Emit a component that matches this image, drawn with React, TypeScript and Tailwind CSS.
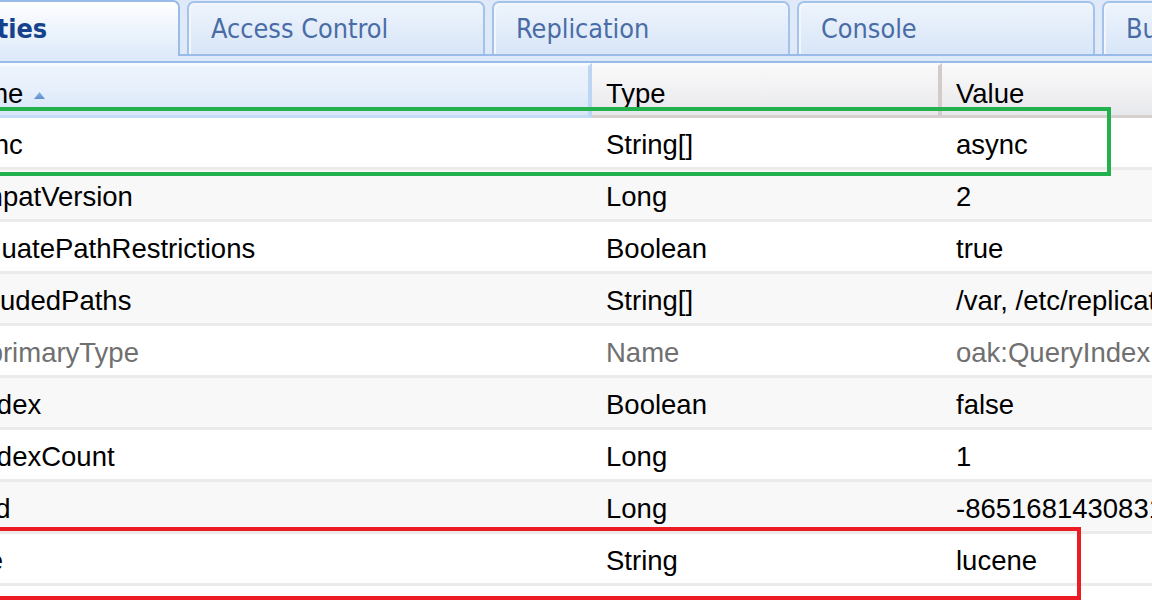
import React from "react";

const tabFont = { fontFamily: '"DejaVu Sans Condensed", "DejaVu Sans", Tahoma, sans-serif' };
const gridFont = { fontFamily: '"Liberation Sans", Arial, sans-serif' };

const tabs = ["Properties", "Access Control", "Replication", "Console", "Build Info"];

// property rows of the selected oak index node
const rows = [
  { name: "async", type: "String[]", value: "async" },
  { name: "compatVersion", type: "Long", value: "2" },
  { name: "evaluatePathRestrictions", type: "Boolean", value: "true" },
  { name: "excludedPaths", type: "String[]", value: "/var, /etc/replication, /etc/workflow/instances, /jcr:system" },
  { name: "jcr:primaryType", type: "Name", value: "oak:QueryIndexDefinition", muted: true },
  { name: "reindex", type: "Boolean", value: "false" },
  { name: "reindexCount", type: "Long", value: "1" },
  { name: "seed", type: "Long", value: "-8651681430831709416" },
  { name: "type", type: "String", value: "lucene" },
];

const SortArrow = () => (
  <svg width="11" height="7" viewBox="0 0 11 7" className="ml-[11px] mt-[3px] shrink-0">
    <defs>
      <linearGradient id="arr" x1="0" y1="0" x2="0" y2="1">
        <stop offset="0" stopColor="#8db5e6" />
        <stop offset="1" stopColor="#5f8fd0" />
      </linearGradient>
    </defs>
    <path d="M5.5 0 L11 7 L0 7 Z" fill="url(#arr)" />
  </svg>
);

export default function App() {
  return (
    <div className="relative w-[1152px] h-[605px] overflow-hidden bg-white">
      {/* Tab strip */}
      <div className="-ml-[118px] w-[1700px]" style={tabFont}>
        <div className="flex items-end gap-[7px] h-[56px] bg-[#dfe9f7] border-b-2 border-[#99bbe8]">
          {tabs.map((t, i) =>
            i === 0 ? (
              <div
                key={t}
                className="relative z-10 -mb-[2px] flex shrink-0 items-center w-[298px] h-[56px] pl-[21px] pt-[1px] rounded-t-[7px] border-x-2 border-t-2 border-[#99bbe8] bg-gradient-to-b from-[#ffffff] to-[#deeafa] text-[26.8px] font-bold text-[#15428b]"
              >
                {t}
              </div>
            ) : (
              <div
                key={t}
                className="flex shrink-0 items-center w-[298px] h-[53px] pl-[22px] pt-[1px] rounded-t-[7px] border-x-2 border-t-2 border-[#a3c3ea] bg-gradient-to-b from-[#eef4fc] to-[#d8e6f8] shadow-[inset_2px_2px_0_#f3f7fd] text-[26.8px] text-[#4a6ca6]"
              >
                {t}
              </div>
            )
          )}
        </div>
        <div className="h-[7px] bg-[#deeafa] border-b-2 border-[#99bbe8]" />
      </div>

      {/* Grid */}
      <div className="-ml-[54px] w-[1400px] text-[27.5px] text-black" style={gridFont}>
        {/* Header */}
        <div className="flex h-[55px]">
          <div className="flex shrink-0 items-center w-[646px] pl-[4px] pt-[6px] border-t-[3px] border-t-[#f7fafe] border-r-[4px] border-r-[#bcd6f4] border-b-[3px] border-b-[#c6dbf5] bg-gradient-to-b from-[#eef4fc] via-[#e6effb] to-[#d8e6f8]">
            <span>Name</span>
            <SortArrow />
          </div>
          <div className="flex shrink-0 items-center w-[350px] pl-[14px] pt-[6px] border-t-[3px] border-t-[#fbfbfb] border-r-[4px] border-r-[#d3caca] border-b-[3px] border-b-[#d8d0d0] bg-gradient-to-b from-[#f9f9f9] via-[#f1f1f3] to-[#e7e8ec]">
            Type
          </div>
          <div className="flex items-center flex-1 pl-[14px] pt-[6px] border-t-[3px] border-t-[#fbfbfb] border-b-[3px] border-b-[#d8d0d0] bg-gradient-to-b from-[#f9f9f9] via-[#f1f1f3] to-[#e7e8ec]">
            Value
          </div>
        </div>

        {/* Rows */}
        {rows.map((r, i) => (
          <div
            key={r.name}
            className={`flex h-[52px] items-center pt-[5px] border-b-[3px] border-[#edeaea] whitespace-nowrap ${
              i % 2 === 1 ? "bg-[#f8f8f8]" : "bg-white"
            } ${r.muted ? "text-[#707070]" : "text-black"}`}
          >
            <div className="w-[646px] shrink-0 pl-[5px] overflow-hidden">{r.name}</div>
            <div className="w-[350px] shrink-0 pl-[14px] overflow-hidden">{r.type}</div>
            <div className="flex-1 pl-[14px] overflow-hidden">{r.value}</div>
          </div>
        ))}
      </div>

      {/* Annotation boxes drawn over the grid */}
      <div className="absolute left-[-10px] top-[107px] w-[1121px] h-[69px] border-[4px] border-[#22b14c] pointer-events-none" />
      <div className="absolute left-[-10px] top-[527px] w-[1091px] h-[73px] border-[4px] border-[#ed1c24] pointer-events-none" />
    </div>
  );
}
